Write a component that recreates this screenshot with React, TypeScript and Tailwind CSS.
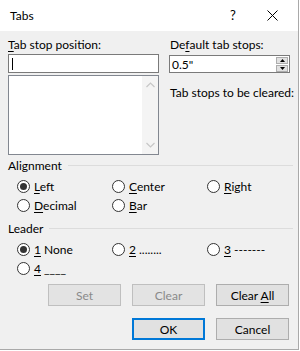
import React from 'react';

const FONT = "font-['Lato','Liberation_Sans',sans-serif]";

function U({ children }: { children: React.ReactNode }) {
  return <span className="underline underline-offset-[2px] decoration-[1px]">{children}</span>;
}

function Radio({ checked, children }: { checked?: boolean; children: React.ReactNode }) {
  return (
    <div className="flex items-center h-[19px]">
      <span className="w-[13px] h-[13px] rounded-full border border-[#333] bg-white flex items-center justify-center shrink-0">
        {checked && <span className="w-[7px] h-[7px] rounded-full bg-[#333]" />}
      </span>
      <span className="ml-[4px] whitespace-pre">{children}</span>
    </div>
  );
}

function Group({ title }: { title: string }) {
  return (
    <div className="flex items-center h-[15px]">
      <span>{title}</span>
      <span className="flex-1 h-px bg-[#dcdcdc] ml-[6px] mr-[-3px]" />
    </div>
  );
}

function Btn({ children, disabled, primary }: { children: React.ReactNode; disabled?: boolean; primary?: boolean }) {
  let cls = 'border-[#adadad] bg-[#e1e1e1] text-black';
  if (disabled) cls = 'border-[#bfbfbf] bg-[#e3e3e3] text-[#8a8a8a]';
  if (primary) cls = 'border-[#0078d7] border-2 bg-[#e1e1e1] text-black';
  return (
    <div className={`w-[73px] h-[22px] border flex items-center justify-center ${cls}`}>
      <span className="whitespace-pre">{children}</span>
    </div>
  );
}

export default function App() {
  return (
    <div className={`w-[300px] h-[351px] bg-white text-[12px] leading-[15px] text-black ${FONT}`}>
      <div className="w-[299px] h-[350px] bg-[#f0f0f0] border-r border-b border-[#a9a9a9] flex flex-col">
        {/* title bar */}
        <div className="h-[31px] bg-white flex items-center pl-[10px] shrink-0">
          <span className="text-[12px]">Tabs</span>
          <span className="ml-auto w-[20px] text-center text-[13px] mr-[24px]">?</span>
          <svg width="11" height="11" viewBox="0 0 11 11" className="mr-[20px]">
            <path d="M0.5 0.5 L10.5 10.5 M10.5 0.5 L0.5 10.5" stroke="#000" strokeWidth="1" />
          </svg>
        </div>

        <div className="px-[8px] flex flex-col">
          {/* top section */}
          <div className="flex pt-[6px]">
            <div className="w-[151px] flex flex-col">
              <span><U>T</U>ab stop position:</span>
              <div className="mt-[2px] h-[19px] bg-white border border-[#7a7a7a] flex items-center pl-[3px]">
                <span className="w-px h-[12px] bg-black" />
              </div>
              <div className="mt-[2px] h-[80px] bg-white border border-[#828790] flex justify-end">
                <div className="w-[16px] bg-[#f4f4f4] flex flex-col items-center justify-between py-[6px]">
                  <svg width="9" height="6" viewBox="0 0 9 6">
                    <path d="M0.5 5 L4.5 1 L8.5 5" stroke="#c6c6c6" fill="none" strokeWidth="1.2" />
                  </svg>
                  <svg width="9" height="6" viewBox="0 0 9 6">
                    <path d="M0.5 1 L4.5 5 L8.5 1" stroke="#c6c6c6" fill="none" strokeWidth="1.2" />
                  </svg>
                </div>
              </div>
            </div>
            <div className="ml-[10px] w-[121px] flex flex-col">
              <span className="pl-[1px]">De<U>f</U>ault tab stops:</span>
              <div className="mt-[3px] h-[18px] bg-white border border-[#7a7a7a] flex items-center pl-[2px]">
                <span className="flex-1">0.5"</span>
                <div className="w-[12px] h-full flex flex-col justify-center gap-px mr-[1px]">
                  <div className="h-[7px] bg-[#e1e1e1] border border-[#adadad] flex items-center justify-center">
                    <svg width="5" height="3" viewBox="0 0 5 3"><path d="M0 3 L2.5 0 L5 3Z" fill="#000" /></svg>
                  </div>
                  <div className="h-[7px] bg-[#e1e1e1] border border-[#adadad] flex items-center justify-center">
                    <svg width="5" height="3" viewBox="0 0 5 3"><path d="M0 0 L2.5 3 L5 0Z" fill="#000" /></svg>
                  </div>
                </div>
              </div>
              <span className="mt-[12px] pl-[1px] whitespace-nowrap">Tab stops to be cleared:</span>
            </div>
          </div>

          {/* alignment */}
          <div className="mt-[3px]">
            <Group title="Alignment" />
          </div>
          <div className="mt-[4px] pl-[9px] grid grid-cols-[95px_95px_auto]">
            <Radio checked><U>L</U>eft</Radio>
            <Radio><U>C</U>enter</Radio>
            <Radio><U>R</U>ight</Radio>
            <Radio><U>D</U>ecimal</Radio>
            <Radio><U>B</U>ar</Radio>
          </div>

          {/* leader */}
          <div className="mt-[6px]">
            <Group title="Leader" />
          </div>
          <div className="mt-[4px] pl-[9px] grid grid-cols-[95px_95px_auto]">
            <Radio checked><U>1</U> None</Radio>
            <Radio><U>2</U> ........</Radio>
            <Radio><U>3</U> -------</Radio>
            <Radio><U>4</U> ____</Radio>
          </div>

          {/* buttons */}
          <div className="mt-[6px] flex justify-end gap-[11px] pr-[1px]">
            <Btn disabled>Set</Btn>
            <Btn disabled>Clear</Btn>
            <Btn>Clear <U>A</U>ll</Btn>
          </div>
          <div className="mt-[12px] flex justify-end gap-[11px] pr-[1px]">
            <Btn primary>OK</Btn>
            <Btn>Cancel</Btn>
          </div>
        </div>
      </div>
    </div>
  );
}
